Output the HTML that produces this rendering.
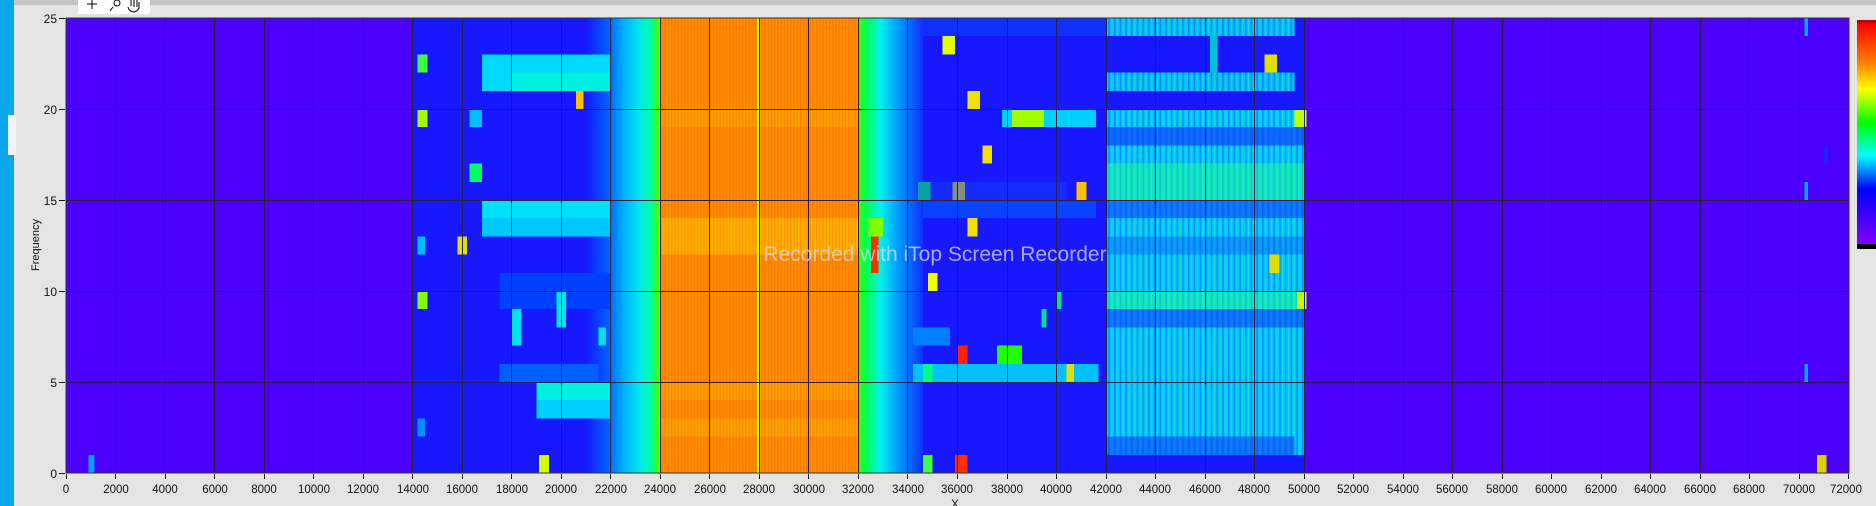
<!DOCTYPE html>
<html><head><meta charset="utf-8"><style>
html,body{margin:0;padding:0;width:1876px;height:506px;overflow:hidden;background:#e4e4e2;font-family:"Liberation Sans",sans-serif}
</style></head><body>
<svg width="1876" height="506" xmlns="http://www.w3.org/2000/svg" style="position:absolute;left:0;top:0">
<defs>
<linearGradient id="lg" x1="0" x2="1" y1="0" y2="0">
<stop offset="0" stop-color="#1818ff"/>
<stop offset="0.3" stop-color="#0060ff"/>
<stop offset="0.5" stop-color="#00b0ff"/>
<stop offset="0.72" stop-color="#00e8f0"/>
<stop offset="0.88" stop-color="#00ffa0"/>
<stop offset="0.97" stop-color="#40ff00"/>
<stop offset="1" stop-color="#80ff00"/>
</linearGradient>
<linearGradient id="rg" x1="0" x2="1" y1="0" y2="0">
<stop offset="0" stop-color="#40ff00"/>
<stop offset="0.12" stop-color="#00ff50"/>
<stop offset="0.35" stop-color="#00f0f0"/>
<stop offset="0.6" stop-color="#00a0ff"/>
<stop offset="1" stop-color="#1030ff"/>
</linearGradient>
<linearGradient id="cb" x1="0" x2="0" y1="0" y2="1">
<stop offset="0" stop-color="#ff0000"/>
<stop offset="0.18" stop-color="#ff8000"/>
<stop offset="0.3" stop-color="#ffff00"/>
<stop offset="0.45" stop-color="#00ff00"/>
<stop offset="0.6" stop-color="#00ffff"/>
<stop offset="0.75" stop-color="#0000ff"/>
<stop offset="1" stop-color="#8000ff"/>
</linearGradient>
<pattern id="str" width="130" height="25" patternUnits="userSpaceOnUse">
<rect width="45" height="25" fill="#ff5000" opacity="0.35"/>
<rect x="80" width="25" height="25" fill="#ffc000" opacity="0.3"/>
</pattern>
<pattern id="cstr" width="230" height="25" patternUnits="userSpaceOnUse">
<rect width="60" height="25" fill="#1050ff" opacity="0.5"/>
<rect x="120" width="45" height="25" fill="#40ff80" opacity="0.4"/>
</pattern>
</defs>
<rect x="0" y="0" width="1876" height="5" fill="#c4c4c4"/>
<rect x="0" y="0" width="14" height="506" fill="#0aa8e8"/>
<rect x="8" y="115" width="8" height="40" fill="#f4f4f4"/>
<!-- toolbar -->
<rect x="78" y="0" width="72" height="14" fill="#fff"/>
<g stroke="#000" stroke-width="1" fill="none">
<path d="M92 0v9M87 4h10"/>
<circle cx="117" cy="3" r="3"/><path d="M113 7l-3 4"/>
<path d="M131 0v6M134 0v7M137 0v7M139 2v6q-2 4-6 4q-4-1-5-5"/>
</g>
<!-- plot -->
<g transform="translate(66,18) scale(0.024764,18.2)" shape-rendering="crispEdges">
<rect x="0" y="0" width="72000" height="25" fill="#4a00fa"/>
<rect x="14000" y="0" width="8000" height="25" fill="#1818ff"/>
<rect x="34000" y="0" width="16000" height="25" fill="#1818ff"/>
<rect x="21000" y="0" width="3000" height="25" fill="url(#lg)"/>
<rect x="24000" y="0" width="8000" height="25" fill="#ff8a00"/>
<rect x="24000" y="11" width="8000" height="2" fill="#ffb000"/>
<rect x="24000" y="5" width="8000" height="1" fill="#ff9c00"/>
<rect x="24000" y="20" width="8000" height="1" fill="#ff9c00"/>
<rect x="24000" y="22" width="8000" height="1" fill="#ffa000"/>
<rect x="24000" y="0" width="8000" height="25" fill="url(#str)"/>
<rect x="27900" y="0" width="120" height="25" fill="#d0ff00"/>
<rect x="32000" y="0" width="2600" height="25" fill="url(#rg)"/>
<!-- left band patches -->
<rect x="900" y="24" width="250" height="1" fill="#00a0ff"/>
<rect x="16800" y="2" width="5200" height="2" fill="#00d8ff"/>
<rect x="18000" y="3" width="4000" height="1" fill="#00f0e0"/>
<rect x="16800" y="10" width="5200" height="2" fill="#00e0f8"/>
<rect x="16800" y="11" width="5200" height="1" fill="#00c8ff"/>
<rect x="19000" y="20" width="3000" height="2" fill="#00d0ff"/>
<rect x="19000" y="20" width="3000" height="1" fill="#00f0e0"/>
<rect x="17500" y="19" width="4000" height="1" fill="#0060ff"/>
<rect x="17500" y="14" width="4500" height="2" fill="#0040ff"/>
<rect x="18000" y="16" width="400" height="2" fill="#00e0f0"/>
<rect x="19800" y="15" width="400" height="2" fill="#00e8e8"/>
<rect x="14200" y="2" width="400" height="1" fill="#40ff40"/>
<rect x="14200" y="5" width="400" height="1" fill="#a0ff00"/>
<rect x="14200" y="15" width="400" height="1" fill="#80ff00"/>
<rect x="14200" y="12" width="300" height="1" fill="#00c0ff"/>
<rect x="14200" y="22" width="300" height="1" fill="#0090ff"/>
<rect x="15800" y="12" width="400" height="1" fill="#e0e000"/>
<rect x="16300" y="8" width="500" height="1" fill="#00ff60"/>
<rect x="16300" y="5" width="500" height="1" fill="#00c0ff"/>
<rect x="19100" y="24" width="400" height="1" fill="#d0ff00"/>
<rect x="20600" y="4" width="300" height="1" fill="#ffc000"/>
<rect x="21500" y="17" width="300" height="1" fill="#00e0e0"/>
<!-- middle-right patches -->
<rect x="34600" y="0" width="7600" height="1" fill="#1030ff"/>
<rect x="32400" y="11" width="600" height="1" fill="#80ff00"/>
<rect x="32500" y="12" width="300" height="2" fill="#ff3000"/>
<rect x="35400" y="1" width="500" height="1" fill="#e0ff00"/>
<rect x="36400" y="4" width="500" height="1" fill="#f0e000"/>
<rect x="37800" y="5" width="3800" height="1" fill="#00d0ff"/>
<rect x="38200" y="5" width="1300" height="1" fill="#a0ff00"/>
<rect x="37000" y="7" width="400" height="1" fill="#f0e000"/>
<rect x="34400" y="9" width="500" height="1" fill="#00ff40"/>
<rect x="35800" y="9" width="500" height="1" fill="#f0e000"/>
<rect x="34400" y="9" width="6000" height="1" fill="#1040ff" opacity="0.5"/>
<rect x="40800" y="9" width="400" height="1" fill="#ffc000"/>
<rect x="34600" y="10" width="7000" height="1" fill="#0060ff" opacity="0.6"/>
<rect x="36400" y="11" width="400" height="1" fill="#f0e000"/>
<rect x="34800" y="14" width="400" height="1" fill="#f0ff00"/>
<rect x="40000" y="15" width="200" height="1" fill="#00e0a0"/>
<rect x="39400" y="16" width="200" height="1" fill="#00e090"/>
<rect x="34200" y="17" width="1500" height="1" fill="#0080ff"/>
<rect x="36000" y="18" width="400" height="1" fill="#ff2000"/>
<rect x="37600" y="18" width="1000" height="1" fill="#20ff00"/>
<rect x="34200" y="19" width="7500" height="1" fill="#00c0ff"/>
<rect x="34600" y="19" width="400" height="1" fill="#00ff80"/>
<rect x="40400" y="19" width="300" height="1" fill="#e0e000"/>
<rect x="35900" y="24" width="500" height="1" fill="#ff3000"/>
<rect x="34600" y="24" width="400" height="1" fill="#40ff40"/>
<!-- 42000-50000 region -->
<rect x="42000" y="5" width="8000" height="19" fill="#00c8ff"/>
<rect x="42000" y="5" width="8000" height="19" fill="url(#cstr)"/>
<rect x="42000" y="6" width="8000" height="1" fill="#1040ff" opacity="0.7"/>
<rect x="42000" y="10" width="8000" height="1" fill="#1040ff" opacity="0.6"/>
<rect x="42000" y="12" width="8000" height="1" fill="#1050ff" opacity="0.4"/>
<rect x="42000" y="16" width="8000" height="1" fill="#1040ff" opacity="0.6"/>
<rect x="42000" y="8" width="8000" height="2" fill="#20ff90" opacity="0.5"/>
<rect x="42000" y="15" width="8000" height="1" fill="#20ff90" opacity="0.5"/>
<rect x="42000" y="0" width="7600" height="1" fill="#00c0ff"/>
<rect x="42000" y="0" width="7600" height="1" fill="url(#cstr)"/>
<rect x="42000" y="3" width="7600" height="1" fill="#00c0ff"/>
<rect x="42000" y="3" width="7600" height="1" fill="url(#cstr)"/>
<rect x="42000" y="23" width="7600" height="1" fill="#1040ff" opacity="0.6"/>
<rect x="48400" y="2" width="500" height="1" fill="#e0e000"/>
<rect x="46200" y="1" width="300" height="2" fill="#00c0e0"/>
<rect x="49600" y="5" width="500" height="1" fill="#c0ff00"/>
<rect x="48600" y="13" width="400" height="1" fill="#e0e000"/>
<rect x="49700" y="15" width="400" height="1" fill="#c0ff00"/>
<!-- far right -->
<rect x="70200" y="0" width="150" height="1" fill="#00b0ff"/>
<rect x="70200" y="9" width="150" height="1" fill="#00b0ff"/>
<rect x="70200" y="19" width="150" height="1" fill="#00b0ff"/>
<rect x="71000" y="7" width="150" height="1" fill="#2020ff"/>
<rect x="70700" y="24" width="400" height="1" fill="#e0d000"/>
</g>
<!-- grid -->
<g stroke="#2a2040" stroke-width="1" shape-rendering="crispEdges">
<path d="M66 109.5H1849M66 200.5H1849M66 291.5H1849M66 382.5H1849"/>
<path d="M115.5 18V473M165.5 18V473M214.5 18V473M264.5 18V473M313.5 18V473M363.5 18V473M412.5 18V473M462.5 18V473M511.5 18V473M561.5 18V473M610.5 18V473M660.5 18V473M709.5 18V473M759.5 18V473M808.5 18V473M858.5 18V473M907.5 18V473M957.5 18V473M1007.5 18V473M1056.5 18V473M1106.5 18V473M1155.5 18V473M1205.5 18V473M1254.5 18V473M1304.5 18V473M1353.5 18V473M1403.5 18V473M1452.5 18V473M1502.5 18V473M1551.5 18V473M1601.5 18V473M1650.5 18V473M1700.5 18V473M1749.5 18V473M1799.5 18V473"/>
</g>
<rect x="66" y="18" width="1783" height="455" fill="none" stroke="#333" stroke-width="1"/>
<!-- watermark -->
<text x="935" y="261" font-family="Liberation Sans,sans-serif" font-size="21" fill="#d8d8e8" fill-opacity="0.75" text-anchor="middle">Recorded with iTop Screen Recorder</text>
<!-- colorbar -->
<rect x="1857" y="20" width="19" height="3" fill="#c00000"/>
<rect x="1857" y="23" width="19" height="221" fill="url(#cb)"/>
<rect x="1857" y="244" width="19" height="5" fill="#000"/>
<!-- y axis -->
<g font-size="12" fill="#111" text-anchor="end">
<text x="57" y="23">25</text><text x="57" y="114">20</text><text x="57" y="205">15</text><text x="57" y="296">10</text><text x="57" y="387">5</text><text x="57" y="478">0</text>
</g>
<g stroke="#111"><path d="M59 18.5h6M59 109.5h6M59 200.5h6M59 291.5h6M59 382.5h6M59 473.5h6"/></g>
<text transform="translate(39,245) rotate(-90)" font-size="11" fill="#111" text-anchor="middle">Frequency</text>
<!-- x axis -->
<g stroke="#111" shape-rendering="crispEdges"><path d="M66.5 474v5M115.5 474v5M165.5 474v5M214.5 474v5M264.5 474v5M313.5 474v5M363.5 474v5M412.5 474v5M462.5 474v5M511.5 474v5M561.5 474v5M610.5 474v5M660.5 474v5M709.5 474v5M759.5 474v5M808.5 474v5M858.5 474v5M907.5 474v5M957.5 474v5M1007.5 474v5M1056.5 474v5M1106.5 474v5M1155.5 474v5M1205.5 474v5M1254.5 474v5M1304.5 474v5M1353.5 474v5M1403.5 474v5M1452.5 474v5M1502.5 474v5M1551.5 474v5M1601.5 474v5M1650.5 474v5M1700.5 474v5M1749.5 474v5M1799.5 474v5M1848.5 474v5"/></g>
<g font-size="11.5" fill="#111" text-anchor="middle">
<text x="66" y="493">0</text><text x="116" y="493">2000</text><text x="165" y="493">4000</text><text x="215" y="493">6000</text><text x="264" y="493">8000</text><text x="314" y="493">10000</text><text x="363" y="493">12000</text><text x="413" y="493">14000</text><text x="462" y="493">16000</text><text x="512" y="493">18000</text><text x="561" y="493">20000</text><text x="611" y="493">22000</text><text x="660" y="493">24000</text><text x="710" y="493">26000</text><text x="759" y="493">28000</text><text x="809" y="493">30000</text><text x="858" y="493">32000</text><text x="908" y="493">34000</text><text x="957" y="493">36000</text><text x="1007" y="493">38000</text><text x="1056" y="493">40000</text><text x="1106" y="493">42000</text><text x="1155" y="493">44000</text><text x="1205" y="493">46000</text><text x="1254" y="493">48000</text><text x="1304" y="493">50000</text><text x="1353" y="493">52000</text><text x="1403" y="493">54000</text><text x="1452" y="493">56000</text><text x="1502" y="493">58000</text><text x="1551" y="493">60000</text><text x="1601" y="493">62000</text><text x="1650" y="493">64000</text><text x="1700" y="493">66000</text><text x="1749" y="493">68000</text><text x="1799" y="493">70000</text><text x="1846" y="493">72000</text>
<text x="955" y="508">X</text>
</g>
</svg>
</body></html>
